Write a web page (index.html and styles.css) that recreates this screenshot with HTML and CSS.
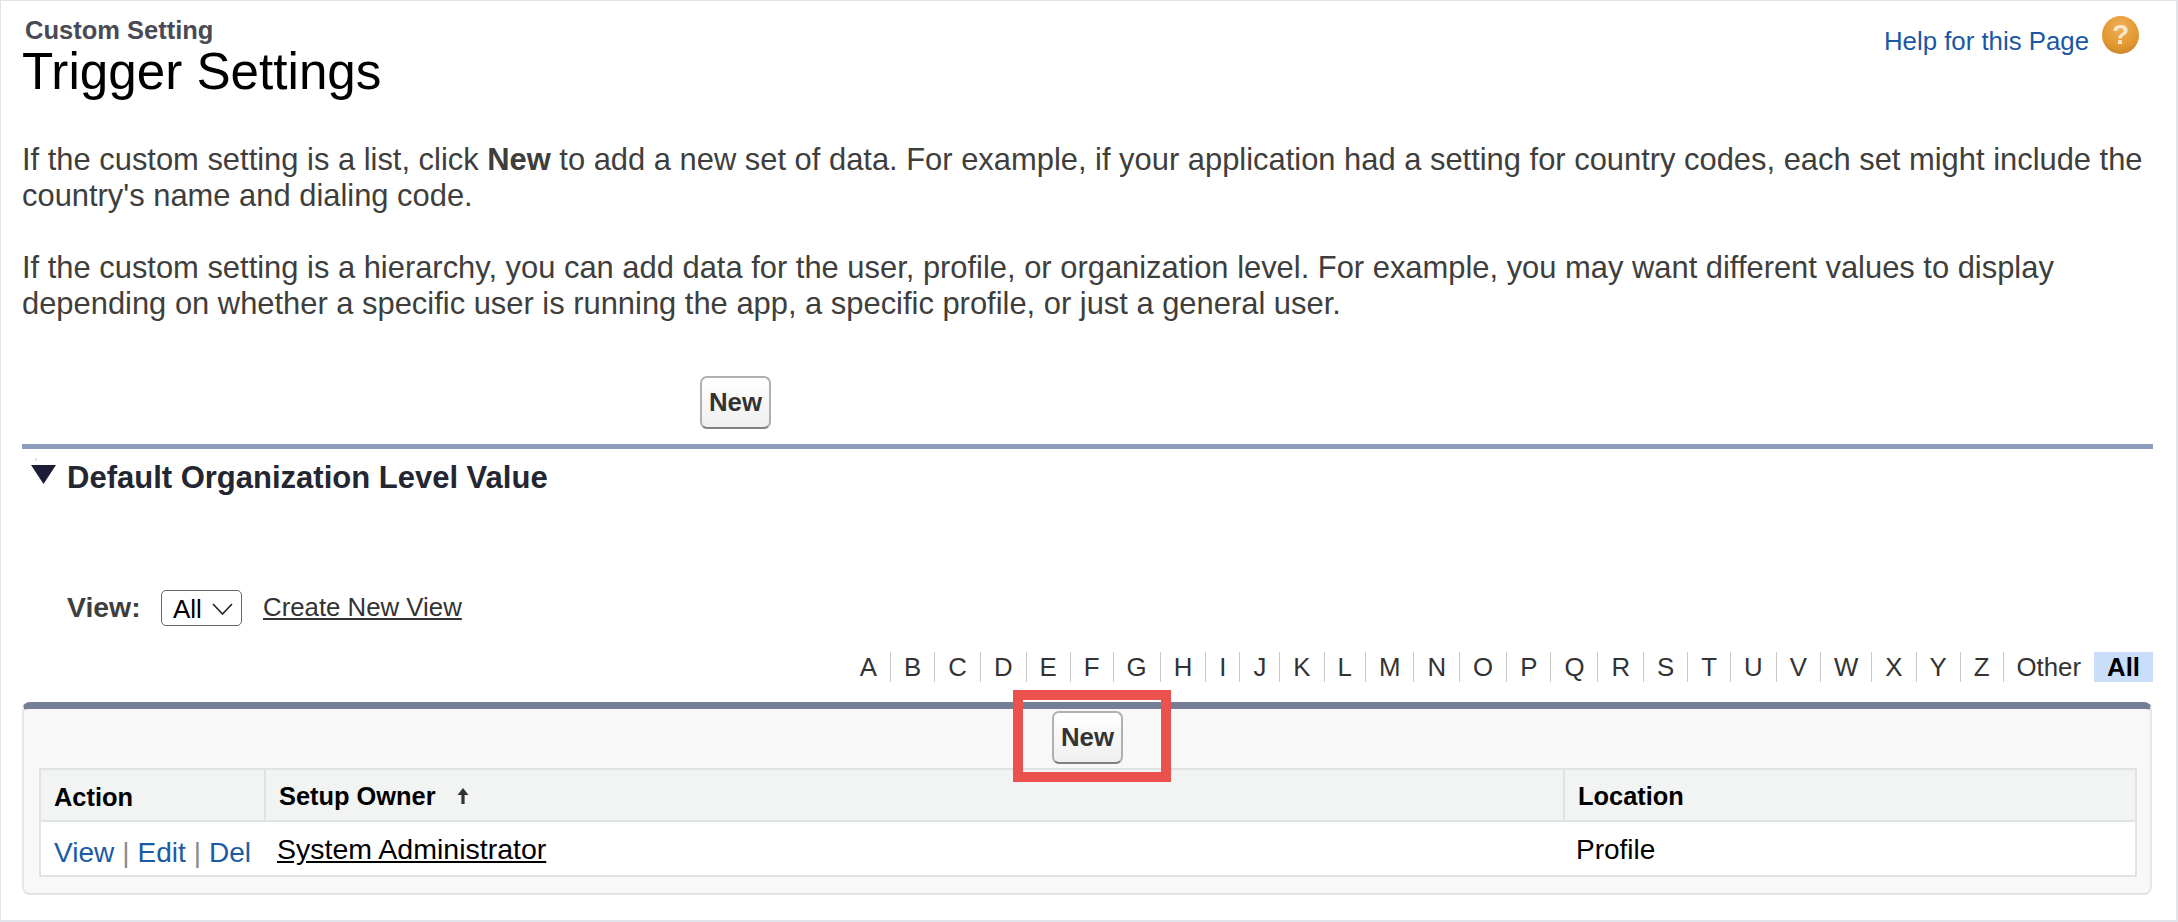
FILE: index.html
```html
<!DOCTYPE html>
<html lang="en">
<head>
  <meta charset="UTF-8" />
  <title>Trigger Settings</title>
  <link rel="stylesheet" href="styles.css">
</head>
<body>
  <div class="page">

    <!-- Page title -->
    <div class="page-header">
      <div class="page-titles">
        <div class="subtitle">Custom Setting</div>
        <h1 class="title">Trigger Settings</h1>
      </div>
      <div class="help">
        <a href="#" class="help-link">Help for this Page</a>
        <span class="help-icon">?</span>
      </div>
    </div>

    <!-- Description -->
    <p class="intro intro-first">If the custom setting is a list, click <b>New</b> to add a new set of data. For example, if your application had a setting for country codes, each set might include the country's name and dialing code.</p>
    <p class="intro">If the custom setting is a hierarchy, you can add data for the user, profile, or organization level. For example, you may want different values to display depending on whether a specific user is running the app, a specific profile, or just a general user.</p>

    <div class="top-actions">
      <button class="btn">New</button>
    </div>

    <!-- Section -->
    <div class="section-head">
      <svg class="twist" width="27" height="26" viewBox="0 0 27 26">
        <circle cx="6" cy="1.5" r="1" fill="#cfcfd6"/>
        <path d="M1 7 H26 L13.5 26 Z" fill="#1d1d38"/>
      </svg>
      <h2 class="section-title">Default Organization Level Value</h2>
    </div>

    <div class="view-row">
      <span class="view-label">View:</span>
      <span class="view-select">All
        <svg width="21" height="12" viewBox="0 0 21 12"><path d="M1 1 L10.5 11 L20 1" fill="none" stroke="#222" stroke-width="1.6"/></svg>
      </span>
      <a href="#" class="view-create">Create New View</a>
    </div>

    <!-- Alphabet filter -->
    <div class="alpha" id="alpha"></div>

    <!-- List -->
    <div class="panel">
      <div class="panel-actions">
        <button class="btn">New</button>
        <span class="callout"></span>
      </div>
      <table class="list">
        <tr class="list-head">
          <th class="col-action">Action</th>
          <th class="col-owner">Setup Owner
            <svg class="sort" width="14" height="17" viewBox="0 0 14 17"><path d="M7 0 L12.5 7 H8.6 V16 H5.4 V7 H1.5 Z" fill="#333"/></svg>
          </th>
          <th>Location</th>
        </tr>
        <tr class="list-row">
          <td class="row-actions"><a href="#">View</a><i>|</i><a href="#">Edit</a><i>|</i><a href="#">Del</a></td>
          <td><a href="#" class="owner">System Administrator</a></td>
          <td>Profile</td>
        </tr>
      </table>
    </div>
  </div>

  <script>
    const alpha = document.getElementById('alpha');
    const letters = 'ABCDEFGHIJKLMNOPQRSTUVWXYZ'.split('').concat(['Other', 'All']);
    letters.forEach(letter => {
      const item = document.createElement('a');
      item.className = letter === 'All' ? 'alpha-item alpha-active' : 'alpha-item';
      item.textContent = letter;
      alpha.appendChild(item);
    });
  </script>
</body>
</html>
```

FILE: styles.css
```css
* {
  box-sizing: border-box;
}
body {
  margin: 0;
  background: #fff;
  font-family: "Liberation Sans", Arial, sans-serif;
  color: #3e3e3c;
}
a {
  color: inherit;
  text-decoration: none;
}
.page {
  width: 2178px;
  height: 922px;
  padding: 0 23px 0 21px;
  border: 1px solid #e0e3e8;
  border-width: 1px 2px 2px 1px;
  overflow: hidden;
}
.page-header {
  display: flex;
  justify-content: space-between;
  height: 118px;
}
.page-titles {
  padding-top: 14px;
}
.subtitle {
  padding-left: 3px;
  font-size: 25.5px;
  line-height: 30px;
  font-weight: bold;
  color: #4a4a56;
}
.title {
  margin: 0;
  font-size: 51.2px;
  line-height: 53px;
  font-weight: normal;
  color: #000;
}
.help {
  display: flex;
  align-items: flex-start;
  padding-top: 15px;
  padding-right: 14px;
}
.help-link {
  margin-top: 10px;
  font-size: 25.8px;
  line-height: 30px;
  color: #1b57a3;
}
.help-icon {
  width: 37px;
  height: 38px;
  margin-left: 13px;
  border-radius: 50%;
  background: radial-gradient(circle at 50% 30%, #f0b05a 0%, #e2962f 60%, #b97a28 100%);
  color: #fbeacf;
  font-size: 28px;
  line-height: 38px;
  font-weight: bold;
  text-align: center;
  filter: blur(0.5px);
}
.intro {
  margin: 0 0 36px;
  font-size: 30.9px;
  line-height: 36px;
  color: #3e3e3c;
}
.intro-first {
  margin-top: 23px;
}
.top-actions {
  padding-left: 678px;
  margin-top: 54px;
}
.btn {
  display: block;
  width: 71px;
  height: 53px;
  padding: 0;
  border: 2px solid #b0b0b0;
  border-bottom-color: #808080;
  border-radius: 7px;
  background: linear-gradient(#fff, #efefef);
  font-family: inherit;
  font-size: 25.8px;
  font-weight: bold;
  color: #333;
}
.section-head {
  display: flex;
  margin-top: 15px;
  height: 50px;
  border-top: 5px solid #8e9dbb;
}
.twist {
  margin: 9px 10px 0 8px;
  filter: blur(0.7px);
}
.section-title {
  margin: 0;
  padding-top: 11px;
  font-size: 31px;
  line-height: 36px;
  font-weight: bold;
  color: #242631;
}
.view-row {
  display: flex;
  align-items: center;
  height: 36px;
  margin-top: 96px;
  padding-left: 45px;
}
.view-label {
  width: 94px;
  padding-bottom: 2px;
  font-size: 28.4px;
  font-weight: bold;
}
.view-select {
  display: flex;
  align-items: center;
  justify-content: space-between;
  width: 81px;
  height: 36px;
  padding: 2px 8px 0 11px;
  border: 1.5px solid #666;
  border-radius: 5px;
  font-size: 26px;
  color: #000;
}
.view-create {
  margin-left: 21px;
  padding-bottom: 2px;
  font-size: 25.8px;
  text-decoration: underline;
  color: #333;
}
.alpha {
  display: flex;
  justify-content: flex-end;
  height: 30px;
  margin-top: 26px;
}
.alpha-item {
  padding: 0 13px;
  border-right: 1.5px solid #c8c8c8;
  font-size: 25.8px;
  line-height: 30px;
  color: #333;
}
.alpha-active {
  border-right: 0;
  background: #c9def8;
  font-weight: bold;
  color: #000;
}
.alpha-item:nth-last-child(2) {
  border-right: 0;
}
.panel {
  position: relative;
  height: 193px;
  margin: 20px 1px 0 0;
  padding: 0 14px 0 15px;
  border-top: 7px solid #747e96;
  border-bottom: 2px solid #e0e3e5;
  border-left: 2px solid #e6e8ea;
  border-right: 2px solid #e6e8ea;
  border-radius: 8px;
  background: #f8f8f8;
}
.panel-actions {
  position: relative;
  height: 59px;
  padding: 2px 0 0 1013px;
}
.callout {
  position: absolute;
  left: 974px;
  top: -19px;
  width: 158px;
  height: 92px;
  border: 10px solid #ec524d;
}
.list {
  width: 2098px;
  border: 2px solid #e0e3e5;
  border-spacing: 0;
  table-layout: fixed;
  color: #000;
}
.list th {
  height: 52px;
  padding: 2px 0 0 13px;
  border-bottom: 2px solid #e0e3e5;
  border-left: 2px solid #e0e3e5;
  background: #f2f3f3;
  font-size: 25.4px;
  font-weight: bold;
  text-align: left;
}
.list th:first-child {
  border-left: 0;
  padding-top: 4px;
}
.col-action {
  width: 223px;
}
.col-owner {
  width: 1299px;
}
.sort {
  margin-left: 13px;
  filter: blur(0.4px);
}
.list td {
  height: 53px;
  padding: 2px 0 0 13px;
  background: #fff;
  font-size: 28px;
}
.list .row-actions {
  padding-top: 8px;
  white-space: nowrap;
  color: #1b5aa6;
}
.row-actions i {
  margin: 0 8px;
  font-style: normal;
  color: #8a8a8a;
}
.owner {
  font-size: 28.5px;
  text-decoration: underline;
  color: #000;
}
```
